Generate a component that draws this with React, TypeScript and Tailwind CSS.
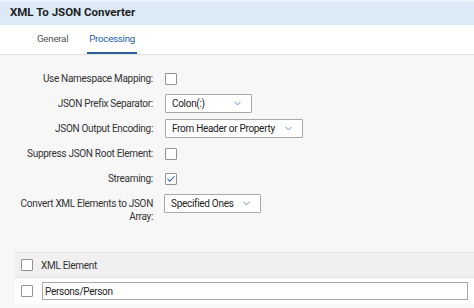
import { ChevronDown, Check } from 'lucide-react'

function Box({ checked = false }: { checked?: boolean }) {
  return (
    <span className="w-[12px] h-[12px] border border-[#939393] bg-white rounded-[1px] flex items-center justify-center">
      {checked && <Check size={10} strokeWidth={2.5} className="text-[#2a5ea8]" />}
    </span>
  )
}

function Select({ value, width }: { value: string; width: string }) {
  return (
    <div className={`h-[19px] ${width} border border-[#a8a8a8] bg-white rounded-[1px] flex items-center justify-between pl-[6px] pr-[8px] text-[10px] tracking-[-0.3px] text-[#222] whitespace-nowrap`}>
      <span>{value}</span>
      <ChevronDown size={11} strokeWidth={1.5} className="text-[#2a5ea8]" />
    </div>
  )
}

const rows: { label: string; control: React.ReactNode }[] = [
  { label: 'Use Namespace Mapping:', control: <Box /> },
  { label: 'JSON Prefix Separator:', control: <Select value="Colon(:)" width="w-[87px]" /> },
  { label: 'JSON Output Encoding:', control: <Select value="From Header or Property" width="w-[138px]" /> },
  { label: 'Suppress JSON Root Element:', control: <Box /> },
  { label: 'Streaming:', control: <Box checked /> },
]

export default function App() {
  return (
    <div className="w-[474px] h-[308px] overflow-hidden bg-[#f7f7f7] font-['Roboto',Arial,sans-serif] text-[#333]">
      {/* title bar */}
      <div className="h-[25px] bg-gradient-to-b from-[#eef4fa] to-[#dceaf8] to-[15%] flex items-center pl-[10px] pt-[1px]">
        <span className="text-[11.5px] font-bold text-[#1f1f1f]">XML To JSON Converter</span>
      </div>

      {/* tabs */}
      <div className="h-[30px] bg-white border-b border-[#e2e2e2] flex items-end pl-[37px] gap-[19px] text-[9.8px] tracking-[-0.3px]">
        <div className="h-full flex items-center text-[#555]">General</div>
        <div className="h-full flex items-center text-[#1d5fa6] border-b-[2px] border-[#2b5d9c] px-[2px] pt-[2px]">Processing</div>
      </div>

      {/* form */}
      <div className="pt-[11px] flex flex-col text-[10px] tracking-[-0.3px]">
        {rows.map((r) => (
          <div key={r.label} className="h-[25px] flex items-center">
            <div className="w-[153px] text-right whitespace-nowrap">{r.label}</div>
            <div className="ml-[12px]">{r.control}</div>
          </div>
        ))}
        <div className="h-[25px] flex items-center">
          <div className="w-[153px] text-right leading-[13px] pt-[13px] whitespace-nowrap">
            Convert XML Elements to JSON
            <br />
            Array:
          </div>
          <div className="ml-[11px]">
            <Select value="Specified Ones" width="w-[97px]" />
          </div>
        </div>
      </div>

      {/* table */}
      <div className="mt-[36px] ml-[15px]">
        <div className="h-[25px] bg-[#f0f0f0] border-t border-[#e4e4e4] flex items-center pl-[6px] text-[10px] tracking-[-0.3px] text-[#333]">
          <Box />
          <span className="ml-[8px]">XML Element</span>
        </div>
        <div className="h-[27px] bg-white border-t border-[#e4e4e4] flex items-center pl-[6px] pr-[6px]">
          <Box />
          <div className="ml-[9px] flex-1 h-[18px] border border-[#a8a8a8] flex items-center pl-[2px] text-[10px] tracking-[-0.3px] text-[#222]">
            Persons/Person
          </div>
        </div>
      </div>
    </div>
  )
}
